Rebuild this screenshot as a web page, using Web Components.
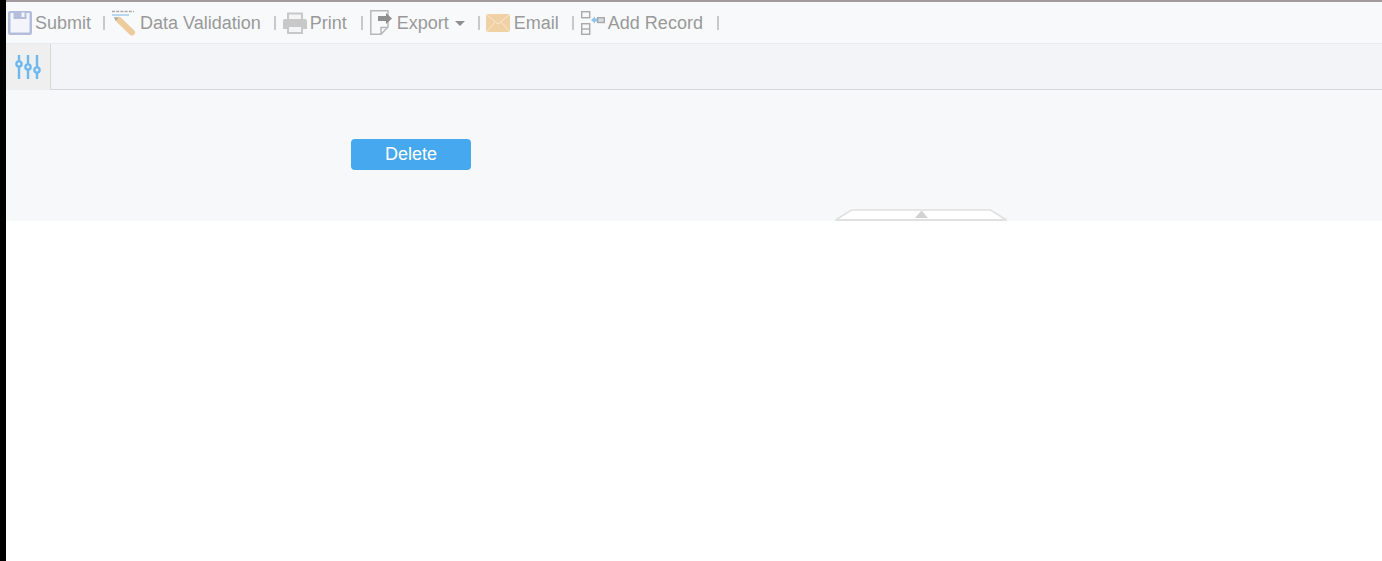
<!DOCTYPE html>
<html>
<head>
<meta charset="utf-8">
<title>Form</title>
<style>
  html, body { margin: 0; height: 100%; background: #fff; overflow: hidden; }
  body { font-family: "Liberation Sans", Arial, sans-serif; }
</style>
</head>
<body>
<app-shell>
  <form-toolbar>
    <tool-item label="Submit" style="--icon-gap:3px;--sep-left:12px;--sep-right:7px">
      <svg slot="icon" width="24" height="24" viewBox="0 0 24 24">
        <rect x="0" y="0" width="24" height="24" rx="2" fill="#b4bddc"/>
        <rect x="2.5" y="2" width="19" height="19.5" fill="#f4f5fa"/>
        <rect x="5.5" y="0" width="13" height="8" fill="#b4bddc"/>
        <rect x="13.5" y="1.5" width="3" height="4.5" fill="#f4f5fa"/>
      </svg>
    </tool-item>
    <tool-item label="Data Validation" style="--icon-gap:3px;--sep-left:13px;--sep-right:7px">
      <svg slot="icon" width="25" height="26" viewBox="0 0 25 26">
        <path d="M0 1.5H22" stroke="#a9a9a9" stroke-width="1.4" stroke-dasharray="3 1.2"/>
        <path d="M0 5H17" stroke="#a9cdee" stroke-width="1.6"/>
        <path d="M7 10L20 22.5" stroke="#eecb9c" stroke-width="6" stroke-linecap="round"/>
        <path d="M2 7L6.5 7.5L3.5 11Z" fill="#a8a8a8"/>
      </svg>
    </tool-item>
    <tool-item label="Print" style="--icon-gap:3px;--sep-left:14px;--sep-right:7px">
      <svg slot="icon" width="24" height="22" viewBox="0 0 24 22">
        <path d="M5 8V1.5H19V8" fill="#f4f5f7" stroke="#c8c8c8" stroke-width="2"/>
        <path d="M2 7H22Q24 7 24 9V17H0V9Q0 7 2 7Z" fill="#c8c8c8"/>
        <rect x="5" y="14" width="14" height="7" fill="#f4f5f7" stroke="#c8c8c8" stroke-width="2"/>
      </svg>
    </tool-item>
    <tool-item label="Export" style="--icon-gap:5px;--sep-left:13px;--sep-right:6px">
      <svg slot="icon" width="22" height="25" viewBox="0 0 22 25">
        <path d="M.8 .8H18V17L11 24.2H.8Z" fill="#f8f9fb" stroke="#b8b8b8" stroke-width="1.5"/>
        <path d="M11 24V17.5H18" fill="none" stroke="#b8b8b8" stroke-width="1.5"/>
        <path d="M8 6H16V3L22 8.5L16 14V11H8Z" fill="#8f8f8f"/>
      </svg>
      <svg slot="after" width="10" height="5" viewBox="0 0 10 5"><path d="M0 0H10L5 5Z" fill="#8f8f8f"/></svg>
    </tool-item>
    <tool-item label="Email" style="--icon-gap:4px;--sep-left:13px;--sep-right:7px">
      <svg slot="icon" width="24" height="18" viewBox="0 0 24 18">
        <rect width="24" height="18" rx="2" fill="#f0d1a4"/>
        <path d="M1 1L12 10L23 1M1 17L9 8M23 17L15 8" fill="none" stroke="#f8e8d2" stroke-width="1"/>
      </svg>
    </tool-item>
    <tool-item label="Add Record" style="--icon-gap:3px;--sep-left:14px;--sep-right:0">
      <svg slot="icon" width="24" height="24" viewBox="0 0 24 24">
        <g fill="#f7f8fb" stroke="#a9a9a9" stroke-width="1.4">
          <rect x=".7" y=".7" width="8" height="6"/>
          <rect x=".7" y="12.7" width="8" height="10.6"/>
        </g>
        <path d="M.7 18H8.7" stroke="#a9a9a9" stroke-width="1.4"/>
        <path d="M10 9L14 5.5V7.5H16V10.5H14V12.5Z" fill="#8fc3ee"/>
        <rect x="16.7" y="6.7" width="6.6" height="4.8" fill="#d5dde6" stroke="#a9a9a9" stroke-width="1.4"/>
      </svg>
    </tool-item>
  </form-toolbar>
  <tab-strip>
    <svg slot="tab" width="26" height="26" viewBox="0 0 26 26">
      <g stroke="#6db8f0" stroke-width="2.4" fill="none">
        <path d="M4 1V7M4 13V25M13 1V10M13 16V25M22 1V13M22 19V25"/>
        <circle cx="4" cy="10" r="2.6"/>
        <circle cx="13" cy="13" r="2.6"/>
        <circle cx="22" cy="16" r="2.6"/>
      </g>
    </svg>
  </tab-strip>
  <form-panel>
    <blue-button>Delete</blue-button>
    <drawer-handle></drawer-handle>
  </form-panel>
</app-shell>

<script>
class AppShell extends HTMLElement {
  constructor() {
    super();
    this.attachShadow({ mode: 'open' });
    this.shadowRoot.innerHTML = `
      <style>
        :host { display: flex; height: 561px; background: #fff; }
        .edge { width: 6px; flex: none; background: #000; }
        .main { flex: 1; min-width: 0; display: flex; flex-direction: column; }
        .top { height: 2px; background: #a39a9c; }
      </style>
      <div class="edge"></div>
      <div class="main"><div class="top"></div><slot></slot></div>
    `;
  }
}

class FormToolbar extends HTMLElement {
  constructor() {
    super();
    this.attachShadow({ mode: 'open' });
    this.shadowRoot.innerHTML = `
      <style>
        :host {
          display: flex; align-items: center; height: 41px; padding-left: 2px;
          background: #f8f9fb; border-bottom: 1px solid #e9ebef;
        }
      </style>
      <slot></slot>
    `;
  }
}

class ToolItem extends HTMLElement {
  constructor() {
    super();
    this.attachShadow({ mode: 'open' });
    this.shadowRoot.innerHTML = `
      <style>
        :host {
          display: inline-flex; align-items: center; height: 100%;
          font-size: 18px; color: #999; white-space: nowrap;
        }
        .icon { display: flex; margin-right: var(--icon-gap, 3px); }
        .label { position: relative; top: 1px; }
        .after { display: flex; }
        .sep {
          width: 2px; height: 14px; background: #c9c9cb;
          margin: 1px var(--sep-right, 8px) 0 var(--sep-left, 13px);
        }
        ::slotted(svg) { display: block; }
        ::slotted(svg[slot="after"]) { margin: 2px 0 0 6px; }
      </style>
      <span class="icon"><slot name="icon"></slot></span>
      <span class="label"></span>
      <span class="after"><slot name="after"></slot></span>
      <span class="sep"></span>
    `;
    this.shadowRoot.querySelector('.label').textContent = this.getAttribute('label');
  }
}

class TabStrip extends HTMLElement {
  constructor() {
    super();
    this.attachShadow({ mode: 'open' });
    this.shadowRoot.innerHTML = `
      <style>
        :host {
          display: flex; height: 45px; background: #f3f4f8;
          border-bottom: 1px solid #d6d8dc;
        }
        .tab {
          width: 44px; height: 46px; display: flex; align-items: center; justify-content: center;
          background: #efefef; border-right: 1px solid #d6d8dc;
        }
      </style>
      <div class="tab"><slot name="tab"></slot></div>
    `;
  }
}

class FormPanel extends HTMLElement {
  constructor() {
    super();
    this.attachShadow({ mode: 'open' });
    this.shadowRoot.innerHTML = `
      <style>
        :host {
          display: flex; flex-direction: column; align-items: flex-start;
          box-sizing: border-box; height: 131px; padding: 49px 0 0 345px;
          background: #f7f8fa; overflow: hidden;
        }
      </style>
      <slot></slot>
    `;
  }
}

class BlueButton extends HTMLElement {
  constructor() {
    super();
    this.attachShadow({ mode: 'open' });
    this.shadowRoot.innerHTML = `
      <style>
        :host {
          display: flex; align-items: center; justify-content: center;
          width: 120px; height: 31px; border-radius: 4px;
          background: #46a8ee; color: #fff; font-size: 18px;
        }
      </style>
      <slot></slot>
    `;
  }
}

class DrawerHandle extends HTMLElement {
  constructor() {
    super();
    this.attachShadow({ mode: 'open' });
    this.shadowRoot.innerHTML = `
      <style>
        :host { display: block; width: 172px; height: 12px; margin: 39px 0 0 484px; }
        svg { display: block; }
      </style>
      <svg width="172" height="12" viewBox="0 0 172 12">
        <path d="M.5 11L16.5 1H155.5L171.5 11" fill="#fff" stroke="#e0e0e0" stroke-width="1.6"/>
        <path d="M.5 11H171.5" stroke="#e0e0e0" stroke-width="2"/>
        <path d="M80 9L86.5 1.5L93 9Z" fill="#d2d2d2"/>
      </svg>
    `;
  }
}

customElements.define('app-shell', AppShell);
customElements.define('form-toolbar', FormToolbar);
customElements.define('tool-item', ToolItem);
customElements.define('tab-strip', TabStrip);
customElements.define('form-panel', FormPanel);
customElements.define('blue-button', BlueButton);
customElements.define('drawer-handle', DrawerHandle);
</script>
</body>
</html>
